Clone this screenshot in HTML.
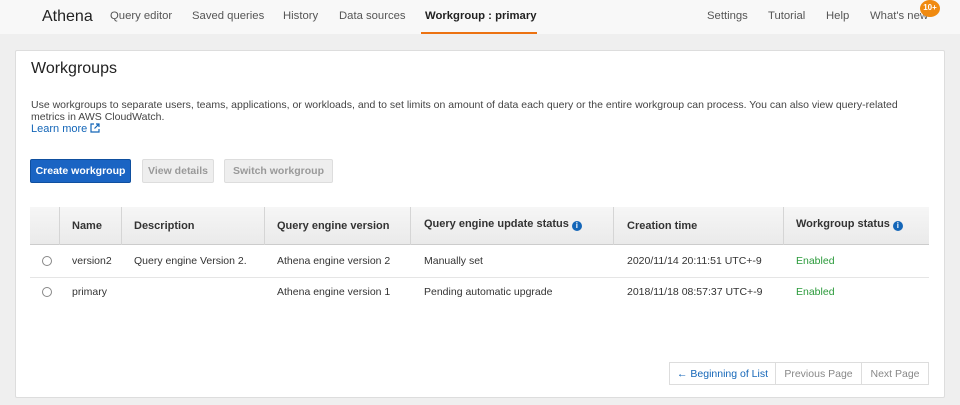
<!DOCTYPE html>
<html><head><style>
*{margin:0;padding:0;box-sizing:border-box}
body{width:960px;height:405px;background:#efefef;font-family:"Liberation Sans",sans-serif;position:relative;overflow:hidden;color:#333}
.a{position:absolute;white-space:nowrap}
.nav{position:absolute;left:0;top:0;width:960px;height:34px;background:#f8f8f8}
.n{font-size:11.3px;color:#555;top:10px}
.panel{position:absolute;left:15px;top:50px;width:930px;height:348px;background:#fff;border:1px solid #ddd;border-radius:2px}
.btn{position:absolute;top:159px;height:24px;font-size:10.5px;font-weight:bold;border-radius:2px;text-align:center;line-height:22px}
.th{font-size:11px;font-weight:bold;color:#333;top:220px}
.td{font-size:10.5px;color:#333}
.vl{position:absolute;top:207px;height:38px;width:1px;background:#d5d5d5}
.hl{position:absolute;left:30px;width:899px;height:1px;background:#e5e5e5}
.radio{position:absolute;left:42px;width:10px;height:10px;border:1px solid #888;border-radius:50%}
.info{display:inline-block;width:10px;height:10px;border-radius:50%;background:#1466b8;color:#fff;font-size:8px;text-align:center;line-height:10px;vertical-align:-1px;margin-left:3px}
.pg{position:absolute;top:362px;height:23px;font-size:10.5px;line-height:22px;text-align:center;border:1px solid #ddd;color:#888;background:#fff}
</style></head><body>
<div class="nav"></div>
<div class="a" style="left:42px;top:8px;font-size:16px;color:#222">Athena</div>
<div class="a n" style="left:110px">Query editor</div>
<div class="a n" style="left:192px">Saved queries</div>
<div class="a n" style="left:283px">History</div>
<div class="a n" style="left:339px">Data sources</div>
<div class="a n" style="left:425px;color:#222;font-weight:bold">Workgroup : primary</div>
<div class="a" style="left:421px;top:32px;width:116px;height:2px;background:#ec7211"></div>
<div class="a n" style="left:707px">Settings</div>
<div class="a n" style="left:768px">Tutorial</div>
<div class="a n" style="left:826px">Help</div>
<div class="a n" style="left:870px">What's new</div>
<div class="a" style="left:920px;top:0;width:20px;height:17px;border-radius:50%;background:#f08a10;color:#fff;font-size:8px;font-weight:bold;text-align:center;line-height:15px">10+</div>
<div class="panel"></div>
<div class="a" style="left:31px;top:60px;font-size:16px;color:#222">Workgroups</div>
<div class="a" style="left:31px;top:99px;font-size:10.5px;color:#444;line-height:12px;white-space:normal;width:895px">Use workgroups to separate users, teams, applications, or workloads, and to set limits on amount of data each query or the entire workgroup can process. You can also view query-related metrics in AWS CloudWatch.</div>
<div class="a" style="left:31px;top:123px;font-size:11px;color:#1466b8">Learn more <svg width="10" height="10" viewBox="0 0 10 10" style="vertical-align:-1px"><path d="M4 1H1v8h8V6M6 1h3v3M9 1L4.5 5.5" fill="none" stroke="#1466b8" stroke-width="1.2"/></svg></div>
<div class="btn" style="left:30px;width:101px;background:#1a64c3;color:#fff;border:1px solid #0f4f9f">Create workgroup</div>
<div class="btn" style="left:142px;width:72px;background:#eee;color:#999;border:1px solid #ddd">View details</div>
<div class="btn" style="left:224px;width:109px;background:#eee;color:#999;border:1px solid #ddd">Switch workgroup</div>
<div class="a" style="left:30px;top:207px;width:899px;height:38px;background:linear-gradient(#f6f6f6,#eaeaea);border-bottom:1px solid #ccc"></div>
<div class="vl" style="left:59px"></div><div class="vl" style="left:121px"></div><div class="vl" style="left:264px"></div><div class="vl" style="left:410px"></div><div class="vl" style="left:613px"></div><div class="vl" style="left:783px"></div>
<div class="a th" style="left:72px">Name</div>
<div class="a th" style="left:134px">Description</div>
<div class="a th" style="left:277px">Query engine version</div>
<div class="a th" style="left:424px;top:218px">Query engine update status<span class="info">i</span></div>
<div class="a th" style="left:627px">Creation time</div>
<div class="a th" style="left:796px;top:218px">Workgroup status<span class="info">i</span></div>
<div class="radio" style="top:256px"></div>
<div class="a td" style="left:72px;top:255px">version2</div>
<div class="a td" style="left:134px;top:255px">Query engine Version 2.</div>
<div class="a td" style="left:277px;top:255px">Athena engine version 2</div>
<div class="a td" style="left:424px;top:255px">Manually set</div>
<div class="a td" style="left:627px;top:255px">2020/11/14 20:11:51 UTC+-9</div>
<div class="a td" style="left:796px;top:255px;color:#2a9a3a">Enabled</div>
<div class="hl" style="top:277px"></div>
<div class="radio" style="top:287px"></div>
<div class="a td" style="left:72px;top:286px">primary</div>
<div class="a td" style="left:277px;top:286px">Athena engine version 1</div>
<div class="a td" style="left:424px;top:286px">Pending automatic upgrade</div>
<div class="a td" style="left:627px;top:286px">2018/11/18 08:57:37 UTC+-9</div>
<div class="a td" style="left:796px;top:286px;color:#2a9a3a">Enabled</div>
<div class="pg" style="left:669px;width:107px;color:#1466b8">← Beginning of List</div>
<div class="pg" style="left:775px;width:87px">Previous Page</div>
<div class="pg" style="left:861px;width:68px">Next Page</div>
</body></html>
